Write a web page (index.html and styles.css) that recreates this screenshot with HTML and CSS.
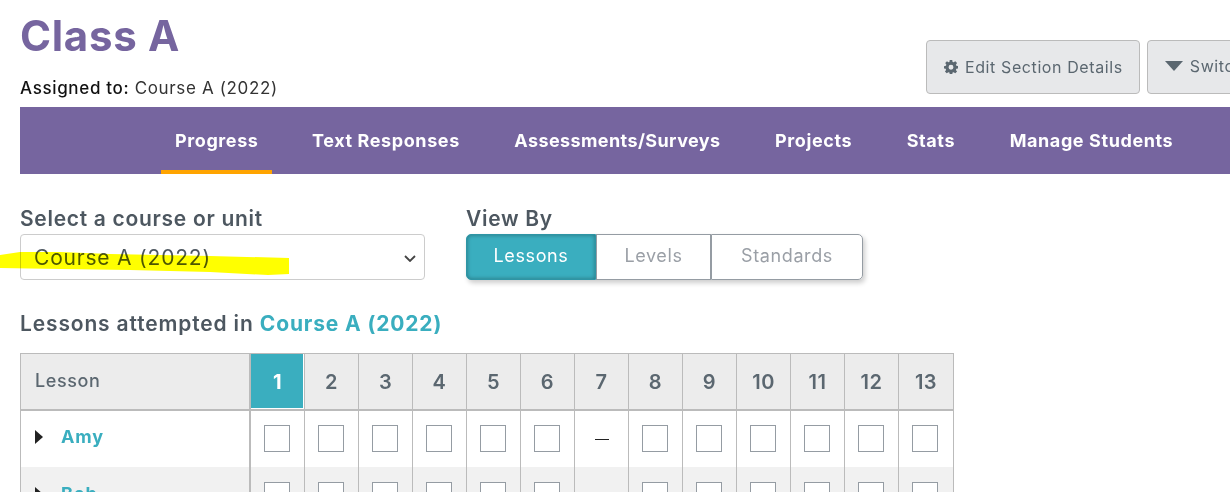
FILE: index.html
```html
<!DOCTYPE html>
<html lang="en">
<head>
<meta charset="utf-8">
<title>Class A</title>
<link rel="stylesheet" href="styles.css">
</head>
<body>
<div class="page">
  <header class="head">
    <div class="head-left">
      <h1 class="title">Class A</h1>
      <p class="assigned"><span class="assigned-label">Assigned to:</span> Course A (2022)</p>
    </div>
    <div class="head-actions">
      <button class="btn btn-edit" type="button">
        <svg class="gear" viewBox="0 0 16 16" width="14" height="14"><path fill="#5b6770" fill-rule="evenodd" d="M6.6 0h2.8l.4 2.2 1.2.5L12.9 1.4l2 2-1.3 1.9.5 1.2 2.2.4v2.8l-2.2.4-.5 1.2 1.3 1.9-2 2-1.9-1.3-1.2.5-.4 2.2H6.6l-.4-2.2-1.2-.5-1.9 1.3-2-2 1.3-1.9-.5-1.2L0 9.8V7l2.2-.4.5-1.2-1.3-2 2-2L5 2.7l1.2-.5L6.6 0zM8 5.4a2.8 2.8 0 1 0 0 5.6 2.8 2.8 0 0 0 0-5.6z"/></svg>
        Edit Section Details
      </button>
      <button class="btn btn-switch" type="button">
        <svg class="caret" viewBox="0 0 18 10" width="18" height="10"><path fill="#5b6770" d="M0 0h18L9 10z"/></svg>
        Switch Section
      </button>
    </div>
  </header>

  <nav class="tabs">
    <a class="tab tab-active">Progress</a>
    <a class="tab">Text Responses</a>
    <a class="tab tab-assess">Assessments/Surveys</a>
    <a class="tab">Projects</a>
    <a class="tab">Stats</a>
    <a class="tab">Manage Students</a>
  </nav>

  <section class="filters">
    <div class="filter-course">
      <label class="filter-label" for="course">Select a course or unit</label>
      <div class="select-wrap">
        <select class="course-select" id="course"><option>Course A (2022)</option></select>
        <svg class="chevron" viewBox="0 0 12 7" width="12" height="7"><path fill="none" stroke="#444" stroke-width="1.8" d="M1 1l5 5 5-5"/></svg>
      </div>
    </div>
    <div class="filter-view">
      <div class="filter-label">View By</div>
      <div class="toggle">
        <button class="toggle-btn toggle-on" type="button">Lessons</button>
        <button class="toggle-btn toggle-levels" type="button">Levels</button>
        <button class="toggle-btn toggle-standards" type="button">Standards</button>
      </div>
    </div>
    <svg class="highlight" viewBox="0 0 290 26" width="290" height="26"><path fill="#ffff00" d="M0 5 L20 2 L60 2 L110 4 L160 5 L210 6 L289 8 L289 24 L268 25 L210 22 L130 20 L60 19 L0 18z"/></svg>
  </section>

  <h2 class="attempted">Lessons attempted in <a class="attempted-link">Course A (2022)</a></h2>

  <table class="grid">
    <thead>
      <tr>
        <th class="name-col">Lesson</th>
        <th class="num num-on">1</th><th class="num">2</th><th class="num">3</th><th class="num">4</th><th class="num">5</th><th class="num">6</th><th class="num">7</th><th class="num">8</th><th class="num">9</th><th class="num">10</th><th class="num">11</th><th class="num">12</th><th class="num">13</th>
      </tr>
    </thead>
    <tbody>
      <tr>
        <td class="name-col"><span class="arrow"></span><a class="student">Amy</a></td>
        <td><span class="box"></span></td><td><span class="box"></span></td><td><span class="box"></span></td><td><span class="box"></span></td><td><span class="box"></span></td><td><span class="box"></span></td><td><span class="dash"></span></td><td><span class="box"></span></td><td><span class="box"></span></td><td><span class="box"></span></td><td><span class="box"></span></td><td><span class="box"></span></td><td><span class="box"></span></td>
      </tr>
      <tr class="alt">
        <td class="name-col"><span class="arrow"></span><a class="student">Bob</a></td>
        <td><span class="box"></span></td><td><span class="box"></span></td><td><span class="box"></span></td><td><span class="box"></span></td><td><span class="box"></span></td><td><span class="box"></span></td><td><span class="dash"></span></td><td><span class="box"></span></td><td><span class="box"></span></td><td><span class="box"></span></td><td><span class="box"></span></td><td><span class="box"></span></td><td><span class="box"></span></td>
      </tr>
    </tbody>
  </table>
</div>
</body>
</html>
```
FILE: styles.css
```css
* { box-sizing: border-box; }
html, body { margin: 0; height: 492px; overflow: hidden; background: #fff; }
body { font-family: Inter, "Noto Sans", "Liberation Sans", sans-serif; color: #4d5760; }
.page { width: 1230px; height: 492px; overflow: hidden; padding-left: 20px; }

.head { display: flex; height: 107px; width: 1400px; }
.head-left { width: 906px; flex: none; }
.title { margin: 0; padding-top: 11px; font-size: 42px; line-height: 50px; font-weight: 700; letter-spacing: .7px; color: #76659f; }
.assigned { margin: 16px 0 0; font-size: 17px; line-height: 22px; letter-spacing: .65px; color: #333; }
.assigned-label { font-weight: 500; color: #111; }
.head-actions { display: flex; gap: 7px; padding-top: 40px; align-items: flex-start; }
.btn { display: flex; align-items: center; gap: 7px; height: 54px; padding: 0 17px; background: #e7e8ea; border: 1px solid #bbb; border-radius: 4px; font: 400 16px Inter, sans-serif; letter-spacing: .6px; color: #5b6770; white-space: nowrap; }
.btn-edit { padding-right: 16px; }
.btn-switch { padding-bottom: 2px; }

.tabs { display: flex; gap: 26.5px; width: 1210px; height: 67px; padding-left: 141px; background: #76659f; }
.tab { display: flex; align-items: center; padding: 0 14px; font-size: 18px; font-weight: 700; letter-spacing: .6px; color: #fff; white-space: nowrap; }
.tab-active { border-bottom: 4px solid #ffa400; padding: 4px 13px 0 14px; }
.tab-assess { letter-spacing: .4px; }

.filters { position: relative; display: flex; gap: 41px; padding-top: 31px; }
.filter-label { display: block; font-size: 21px; line-height: 27px; font-weight: 600; letter-spacing: .7px; color: #4d5760; margin-bottom: 2px; }
.filter-course { width: 405px; }
.select-wrap { position: relative; }
.course-select { display: block; appearance: none; width: 405px; height: 46px; padding: 0 13px; font: 400 21px Inter, sans-serif; letter-spacing: .8px; color: #4d5760; background: #fff; border: 1px solid #ccc; border-radius: 4px; }
.chevron { position: absolute; right: 9px; top: 21px; }
.highlight { position: absolute; left: -20px; top: 76px; mix-blend-mode: multiply; }

.toggle { display: flex; height: 46px; border-radius: 5px; box-shadow: 2px 3px 5px rgba(0,0,0,.2); }
.toggle-btn { height: 46px; padding: 0 0 3px; background: #fff; border: 1px solid #959ca3; font: 400 18px Inter, sans-serif; letter-spacing: .6px; color: #9a9fa6; }
.toggle-on { width: 130px; background: #3aaebf; border-color: #2e95a5; color: #fff; border-radius: 5px 0 0 5px; box-shadow: inset 0 0 4px rgba(0,0,0,.35); }
.toggle-levels { width: 115px; }
.toggle-standards { width: 152px; border-radius: 0 5px 5px 0; }

.attempted { margin: 30px 0 0; font-size: 21px; line-height: 27px; font-weight: 600; letter-spacing: .85px; color: #4d5760; }
.attempted-link { font-weight: 700; color: #3aaebf; }

.grid { margin-top: 16px; border-collapse: separate; border-spacing: 0; table-layout: fixed; width: 934px; }
.grid th, .grid td { padding: 0; text-align: center; width: 54px; border-right: 1px solid #bbb; }
.grid th:last-child, .grid td:last-child { width: 55px; }
.grid thead th { height: 58px; background: #ececec; border-top: 1px solid #bbb; border-bottom: 2px solid #bbb; font-size: 20px; font-weight: 600; letter-spacing: .5px; color: #5b6770; }
.grid th.num-on { background: #3aaebf; color: #fff; font-weight: 700; box-shadow: inset -1px -1px 0 #fff; }
.grid th.name-col, .grid td.name-col { width: 231px; text-align: left; padding-left: 14px; border-left: 1px solid #bbb; border-right: 2px solid #bbb; }
.grid th.name-col { font-size: 18px; font-weight: 500; letter-spacing: .6px; padding-bottom: 3px; }
.grid tbody td { height: 56px; padding-top: 14px; vertical-align: top; }
.grid tbody .alt td { height: 57px; padding-top: 15px; }
.grid tbody td.name-col { padding-top: 10px; }
.grid tbody .alt td.name-col { padding-top: 11px; }
.alt td { background: #f1f1f1; }
.arrow { display: inline-block; width: 0; height: 0; border-left: 8px solid #222; border-top: 7px solid transparent; border-bottom: 7px solid transparent; margin-right: 18px; vertical-align: middle; }
.student { font-size: 18px; line-height: 32px; font-weight: 700; letter-spacing: .8px; color: #3aaebf; vertical-align: middle; }
.box { display: block; width: 26px; height: 27px; margin-left: 13px; border: 1px solid #959ca3; background: #fff; }
.dash { display: block; width: 14px; height: 1px; margin: 14px auto 0; background: #222; }
```
